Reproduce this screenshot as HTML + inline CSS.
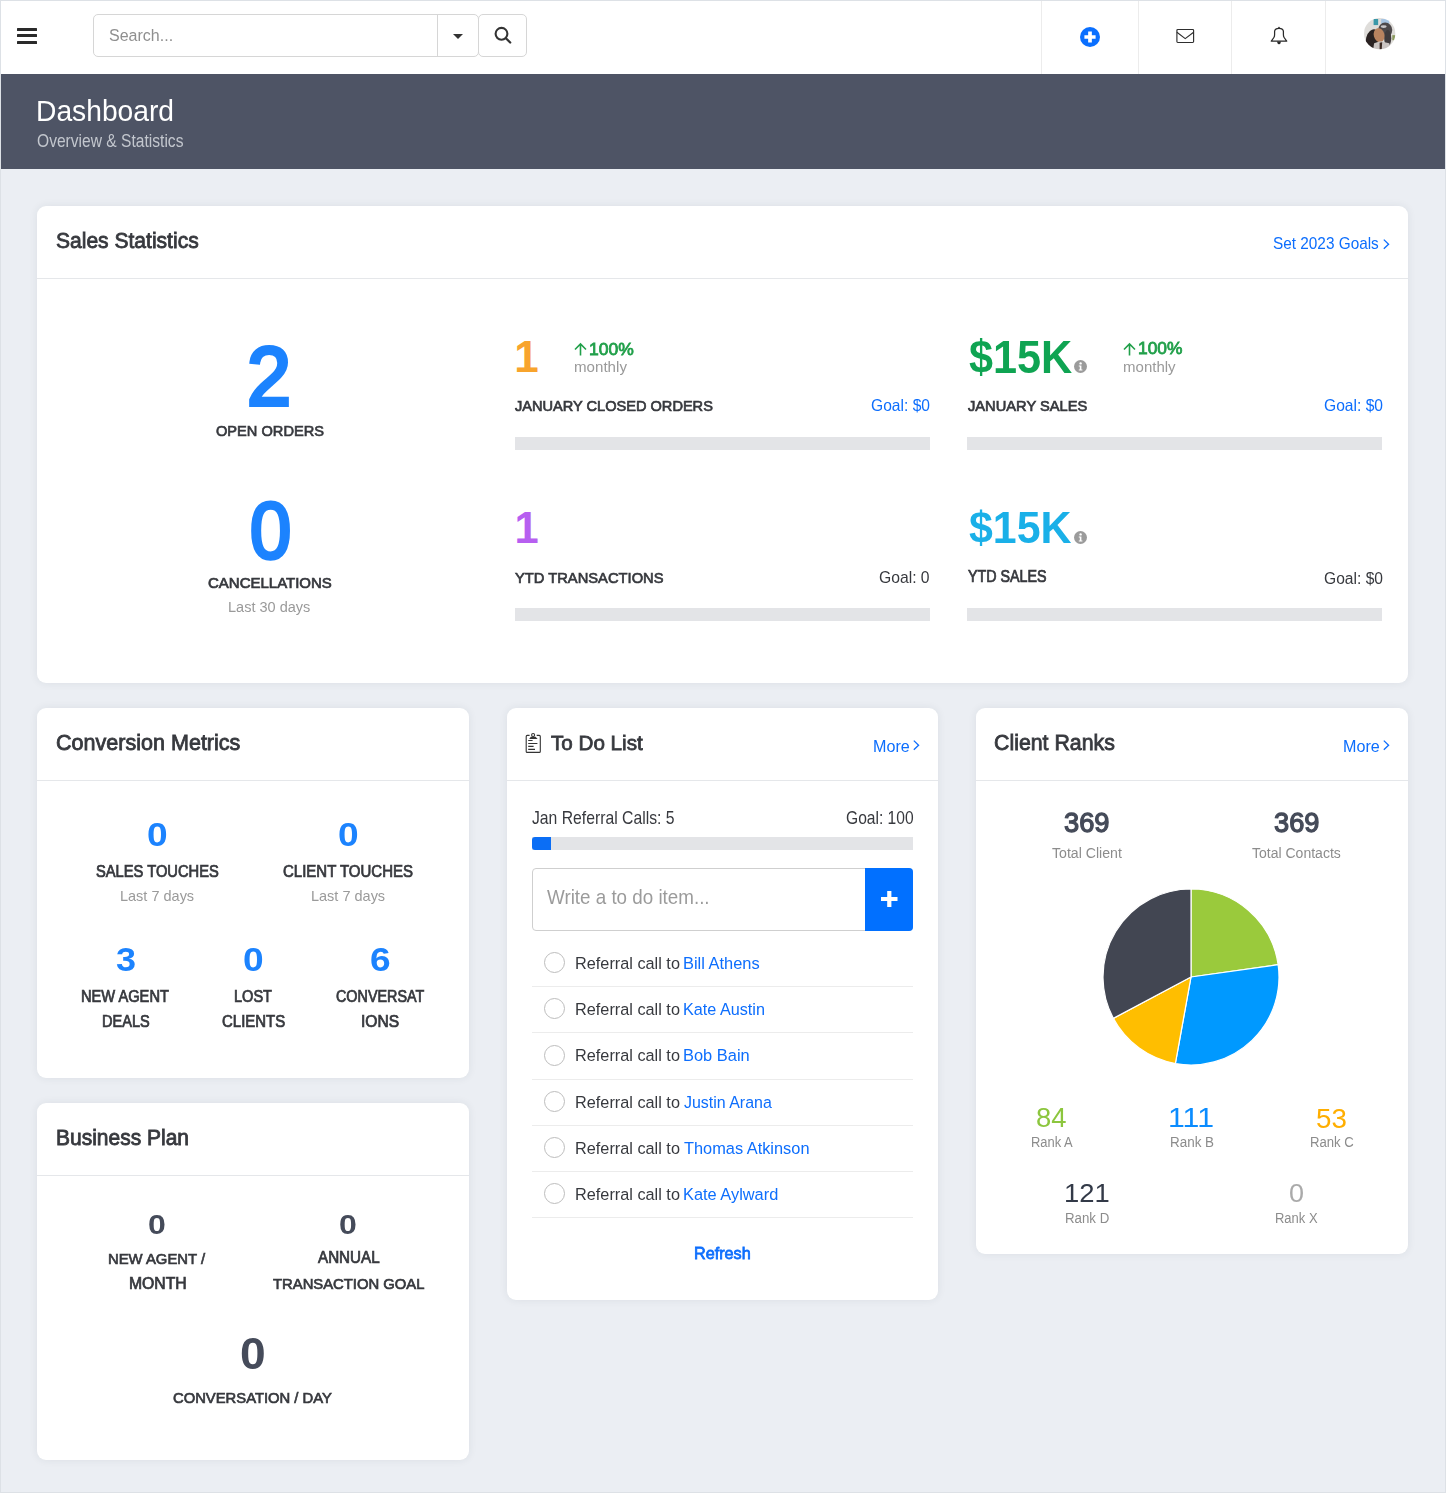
<!DOCTYPE html>
<html><head><meta charset="utf-8"><title>Dashboard</title>
<style>
html,body{margin:0;padding:0}
body{width:1446px;height:1493px;position:relative;overflow:hidden;background:#ebeef3;font-family:"Liberation Sans",sans-serif;}
.frame{position:absolute;left:0;top:0;width:1444px;height:1491px;border:1px solid #dde1e6;}
.nav{position:absolute;left:1px;top:1px;width:1444px;height:73px;background:#fff;}
.sep{position:absolute;top:1px;width:1px;height:73px;background:#ececec;}
.band{position:absolute;left:1px;top:74px;width:1444px;height:95px;background:#4e5465;}
.card{position:absolute;background:#fff;border-radius:9px;box-shadow:0 0 9px rgba(40,50,70,.08);}
.hr{position:absolute;height:1px;background:#e5e7ea;}
.bar{position:absolute;height:13px;background:#e3e4e7;}
.tx{position:absolute;line-height:1;white-space:nowrap;font-family:"Liberation Sans",sans-serif;}
svg{position:absolute;overflow:visible}
</style></head>
<body>
<div class="frame"></div>
<div class="nav"></div>
<!-- hamburger -->
<div style="position:absolute;left:17px;top:28px;width:20px;height:3px;background:#2a2a2a;border-radius:0.5px"></div>
<div style="position:absolute;left:17px;top:34px;width:20px;height:3px;background:#2a2a2a;border-radius:0.5px"></div>
<div style="position:absolute;left:17px;top:41px;width:20px;height:3px;background:#2a2a2a;border-radius:0.5px"></div>
<!-- search group -->
<div style="position:absolute;left:93px;top:14px;width:384px;height:41px;border:1px solid #d6d6d6;border-radius:5px;background:#fff"></div>
<div style="position:absolute;left:437px;top:15px;width:1px;height:41px;background:#d6d6d6"></div>
<div style="position:absolute;left:478px;top:14px;width:47px;height:41px;border:1px solid #d6d6d6;border-radius:5px;background:#fff"></div>
<svg style="left:453px;top:34px" width="10" height="5"><path d="M0 0H10L5 5Z" fill="#333"/></svg>
<svg style="left:490px;top:22px" width="26" height="26" viewBox="0 0 26 26"><circle cx="11.5" cy="11.8" r="5.9" fill="none" stroke="#333" stroke-width="2.1"/><path d="M15.9 16.2L20.2 20.5" stroke="#333" stroke-width="2.3" stroke-linecap="round"/></svg>
<!-- nav right -->
<div class="sep" style="left:1041px"></div>
<div class="sep" style="left:1138px"></div>
<div class="sep" style="left:1231px"></div>
<div class="sep" style="left:1325px"></div>
<svg style="left:1080px;top:26.5px" width="20" height="20" viewBox="0 0 20 20"><circle cx="10" cy="10" r="10" fill="#0a6fff"/><path d="M10 4.4V15.6M4.4 10H15.6" stroke="#fff" stroke-width="3.7"/></svg>
<svg style="left:1176px;top:29px" width="19" height="14" viewBox="0 0 19 14"><rect x="0.9" y="0.5" width="16.7" height="13" rx="0.9" fill="none" stroke="#2e2e2e" stroke-width="1.15"/><path d="M0.9 3.3L9.25 9.6L17.6 3.3" fill="none" stroke="#2e2e2e" stroke-width="1.15"/></svg>
<svg style="left:1266px;top:22px" width="26" height="26" viewBox="0 0 26 26"><path d="M5.3 19.2L7.9 15.5Q8.6 14.5 8.6 12.5V9.5Q8.6 6.3 13 6.3Q17.4 6.3 17.4 9.5V12.5Q17.4 14.5 18.1 15.5L20.7 19.2Z" fill="none" stroke="#2a2a2a" stroke-width="1.25" stroke-linejoin="round"/><circle cx="13" cy="5.5" r="0.8" fill="#2a2a2a"/><path d="M10.9 19.4H15.1Q14.5 22.2 13 22.2Q11.5 22.2 10.9 19.4Z" fill="#2a2a2a"/></svg>
<!-- avatar -->
<svg style="left:1364px;top:17.8px" width="31.3" height="31.3" viewBox="0 0 31 31"><defs><clipPath id="avc"><circle cx="15.5" cy="15.5" r="15.5"/></clipPath><filter id="avb" x="-20%" y="-20%" width="140%" height="140%"><feGaussianBlur stdDeviation="0.55"/></filter></defs><g clip-path="url(#avc)"><g filter="url(#avb)"><rect x="-2" y="-2" width="35" height="35" fill="#dfddda"/><rect x="9.5" y="1" width="4.5" height="6" fill="#3a98a8"/><rect x="17" y="1" width="8" height="5" fill="#a6c4e2"/><ellipse cx="21" cy="12" rx="7" ry="7.5" fill="#4d494b"/><ellipse cx="19.5" cy="8.5" rx="3" ry="1.4" fill="#c9c7c9"/><ellipse cx="23.5" cy="20" rx="3.5" ry="8" fill="#3f3b3c"/><ellipse cx="8.5" cy="21" rx="6.5" ry="10" transform="rotate(15 8.5 21)" fill="#2a2422"/><ellipse cx="15" cy="17" rx="5.3" ry="7" transform="rotate(-15 15 17)" fill="#b9835f"/><path d="M10 25L16 23L25 25L27 32H9Z" fill="#cac4c2"/><path d="M15.5 24.5L18 24L17.5 32H15.5Z" fill="#3a2a24"/><rect x="28" y="17" width="4" height="5" fill="#8b9a5e"/></g></g></svg>

<div class="band"></div>

<!-- cards -->
<div class="card" style="left:37px;top:206px;width:1371px;height:477px"></div>
<div class="hr" style="left:37px;top:278px;width:1371px"></div>
<div class="bar" style="left:515px;top:437px;width:415px"></div>
<div class="bar" style="left:967px;top:437px;width:415px"></div>
<div class="bar" style="left:515px;top:608px;width:415px"></div>
<div class="bar" style="left:967px;top:608px;width:415px"></div>
<!-- arrows -->
<svg style="left:574px;top:343px" width="13" height="13" viewBox="0 0 13 13"><path d="M6.5 12.5V1.2M1 6.5L6.5 1L12 6.5" fill="none" stroke="#21a04a" stroke-width="1.6"/></svg>
<svg style="left:1123px;top:343px" width="13" height="13" viewBox="0 0 13 13"><path d="M6.5 12.5V1.2M1 6.5L6.5 1L12 6.5" fill="none" stroke="#21a04a" stroke-width="1.6"/></svg>
<!-- info icons -->
<svg style="left:1074px;top:360px" width="13" height="13" viewBox="0 0 13 13"><circle cx="6.5" cy="6.5" r="6.5" fill="#9b9b9b"/><circle cx="6.6" cy="3.4" r="1.2" fill="#fff"/><path d="M4.8 5.4H7.4V9.6H8.4V10.6H4.8V9.6H5.8V6.4H4.8Z" fill="#fff"/></svg>
<svg style="left:1074px;top:531px" width="13" height="13" viewBox="0 0 13 13"><circle cx="6.5" cy="6.5" r="6.5" fill="#9b9b9b"/><circle cx="6.6" cy="3.4" r="1.2" fill="#fff"/><path d="M4.8 5.4H7.4V9.6H8.4V10.6H4.8V9.6H5.8V6.4H4.8Z" fill="#fff"/></svg>
<!-- chevron set goals -->
<svg style="left:1382.5px;top:238.5px" width="7" height="11" viewBox="0 0 7 11"><path d="M0.8 0.6L5.6 5.2L0.8 9.8" fill="none" stroke="#0d6efd" stroke-width="1.3"/></svg>

<div class="card" style="left:37px;top:708px;width:432px;height:370px"></div>
<div class="hr" style="left:37px;top:780px;width:432px"></div>

<div class="card" style="left:37px;top:1103px;width:432px;height:357px"></div>
<div class="hr" style="left:37px;top:1175px;width:432px"></div>

<div class="card" style="left:507px;top:708px;width:431px;height:592px"></div>
<div class="hr" style="left:507px;top:780px;width:431px"></div>
<svg style="left:520px;top:728px" width="28" height="30" viewBox="0 0 28 30"><path d="M9.6 7.4H7.2Q6.2 7.4 6.2 8.4V23.4Q6.2 24.4 7.2 24.4H19.3Q20.3 24.4 20.3 23.4V8.4Q20.3 7.4 19.3 7.4H16.7" fill="none" stroke="#333" stroke-width="1.1"/><path d="M9.2 10.9L10.8 8.8H15.6L17.6 10.9Z" fill="#333"/><circle cx="13.1" cy="7" r="1.5" fill="none" stroke="#333" stroke-width="1.1"/><path d="M8.2 12.5H12.6M8.2 15.5H17.4M8.2 18.4H13.6M8.2 21.4H15" stroke="#333" stroke-width="1.1"/></svg>
<svg style="left:913px;top:740px" width="7" height="11" viewBox="0 0 7 11"><path d="M0.8 0.6L5.6 5.2L0.8 9.8" fill="none" stroke="#0d6efd" stroke-width="1.3"/></svg>
<div class="bar" style="left:532px;top:837px;width:381px"></div>
<div style="position:absolute;left:532px;top:837px;width:19px;height:13px;background:#0b6ef5;border-radius:3px 0 0 3px"></div>
<div style="position:absolute;left:532px;top:868px;width:379px;height:61px;border:1px solid #cfcfcf;border-radius:4px;background:#fff"></div>
<div style="position:absolute;left:865px;top:868px;width:48px;height:63px;background:#0170ff;border-radius:0 4px 4px 0"></div>
<svg style="left:881px;top:891px" width="17" height="17" viewBox="0 0 17 17"><path d="M8.3 0V16M0 8H16.5" stroke="#fff" stroke-width="4.2"/></svg>
<!-- todo rows -->
<div style="position:absolute;left:544px;top:952.1px;width:19px;height:19px;border:1px solid #bdbdbd;border-radius:50%"></div>
<div class="hr" style="left:532px;top:986.1px;width:381px;background:#ececec"></div>
<div style="position:absolute;left:544px;top:998.3px;width:19px;height:19px;border:1px solid #bdbdbd;border-radius:50%"></div>
<div class="hr" style="left:532px;top:1032.3px;width:381px;background:#ececec"></div>
<div style="position:absolute;left:544px;top:1044.5px;width:19px;height:19px;border:1px solid #bdbdbd;border-radius:50%"></div>
<div class="hr" style="left:532px;top:1078.5px;width:381px;background:#ececec"></div>
<div style="position:absolute;left:544px;top:1090.7px;width:19px;height:19px;border:1px solid #bdbdbd;border-radius:50%"></div>
<div class="hr" style="left:532px;top:1124.7px;width:381px;background:#ececec"></div>
<div style="position:absolute;left:544px;top:1136.9px;width:19px;height:19px;border:1px solid #bdbdbd;border-radius:50%"></div>
<div class="hr" style="left:532px;top:1170.9px;width:381px;background:#ececec"></div>
<div style="position:absolute;left:544px;top:1183.1px;width:19px;height:19px;border:1px solid #bdbdbd;border-radius:50%"></div>
<div class="hr" style="left:532px;top:1217.1px;width:381px;background:#ececec"></div>

<div class="card" style="left:976px;top:708px;width:432px;height:546px"></div>
<div class="hr" style="left:976px;top:780px;width:432px"></div>
<svg style="left:1383px;top:740px" width="7" height="11" viewBox="0 0 7 11"><path d="M0.8 0.6L5.6 5.2L0.8 9.8" fill="none" stroke="#0d6efd" stroke-width="1.3"/></svg>
<svg style="left:1101.4px;top:887.4px" width="180.0" height="180.0" viewBox="-90.0 -90.0 180.0 180.0"><path d="M0 0L0.00 -88.00A88.0 88.0 0 0 1 87.13 -12.32Z" fill="#9aca3c" stroke="#fff" stroke-width="1.2" stroke-linejoin="round"/><path d="M0 0L87.13 -12.32A88.0 88.0 0 0 1 -15.65 86.60Z" fill="#0099ff" stroke="#fff" stroke-width="1.2" stroke-linejoin="round"/><path d="M0 0L-15.65 86.60A88.0 88.0 0 0 1 -77.66 41.38Z" fill="#ffbe00" stroke="#fff" stroke-width="1.2" stroke-linejoin="round"/><path d="M0 0L-77.66 41.38A88.0 88.0 0 0 1 -0.00 -88.00Z" fill="#424652" stroke="#fff" stroke-width="1.2" stroke-linejoin="round"/></svg>

<div class="tx" style="left:108.78px;top:27.32px;font-size:17.10px;font-weight:400;color:#8f8f8f;letter-spacing:0.000px;transform:scaleX(0.9369);transform-origin:0 0;">Search...</div>
<div class="tx" style="left:36.34px;top:96.32px;font-size:29.38px;font-weight:400;color:#ffffff;letter-spacing:0.000px;transform:scaleX(0.9607);transform-origin:0 0;">Dashboard</div>
<div class="tx" style="left:37.10px;top:132.65px;font-size:17.66px;font-weight:400;color:#c3c7ce;letter-spacing:0.000px;transform:scaleX(0.8833);transform-origin:0 0;">Overview &amp; Statistics</div>
<div class="tx" style="left:56.37px;top:229.93px;font-size:21.93px;font-weight:400;-webkit-text-stroke:0.83px #37393e;color:#37393e;letter-spacing:0.000px;transform:scaleX(0.9600);transform-origin:0 0;">Sales Statistics</div>
<div class="tx" style="left:1273.01px;top:236.29px;font-size:15.72px;font-weight:400;color:#0d6efd;letter-spacing:0.000px;transform:scaleX(0.9763);transform-origin:0 0;">Set 2023 Goals</div>
<div class="tx" style="left:247.25px;top:335.64px;font-size:82.86px;font-weight:400;-webkit-text-stroke:3.81px #1c83fe;color:#1c83fe;letter-spacing:0.000px;transform:scaleX(0.9547);transform-origin:0 0;">2</div>
<div class="tx" style="left:215.68px;top:423.85px;font-size:14.47px;font-weight:400;-webkit-text-stroke:0.67px #37393e;color:#37393e;letter-spacing:0.000px;transform:scaleX(1.0101);transform-origin:0 0;">OPEN ORDERS</div>
<div class="tx" style="left:249.66px;top:489.52px;font-size:80.29px;font-weight:400;-webkit-text-stroke:3.69px #1c83fe;color:#1c83fe;letter-spacing:0.000px;transform:scaleX(0.9221);transform-origin:0 0;">0</div>
<div class="tx" style="left:207.89px;top:575.79px;font-size:14.89px;font-weight:400;-webkit-text-stroke:0.69px #37393e;color:#37393e;letter-spacing:0.000px;transform:scaleX(1.0078);transform-origin:0 0;">CANCELLATIONS</div>
<div class="tx" style="left:228.14px;top:600.34px;font-size:14.48px;font-weight:400;color:#9a9a9a;letter-spacing:0.000px;transform:scaleX(1.0030);transform-origin:0 0;">Last 30 days</div>
<div class="tx" style="left:514.35px;top:335.30px;font-size:44.06px;font-weight:700;color:#f8a42c;letter-spacing:0.000px;">1</div>
<div class="tx" style="left:589.08px;top:340.81px;font-size:17.00px;font-weight:400;-webkit-text-stroke:0.78px #21a04a;color:#21a04a;letter-spacing:0.000px;transform:scaleX(1.0287);transform-origin:0 0;">100%</div>
<div class="tx" style="left:574.02px;top:360.72px;font-size:13.79px;font-weight:400;color:#9a9a9a;letter-spacing:0.000px;transform:scaleX(1.0971);transform-origin:0 0;">monthly</div>
<div class="tx" style="left:515.42px;top:398.81px;font-size:14.75px;font-weight:400;-webkit-text-stroke:0.68px #37393e;color:#37393e;letter-spacing:0.000px;transform:scaleX(0.9880);transform-origin:0 0;">JANUARY CLOSED ORDERS</div>
<div class="tx" style="left:871.12px;top:398.30px;font-size:16.89px;font-weight:400;color:#0d6efd;letter-spacing:0.000px;transform:scaleX(0.9247);transform-origin:0 0;">Goal: $0</div>
<div class="tx" style="left:968.57px;top:334.99px;font-size:45.37px;font-weight:700;color:#0fa452;letter-spacing:0.000px;transform:scaleX(0.9519);transform-origin:0 0;">$15K</div>
<div class="tx" style="left:1138.09px;top:341.13px;font-size:16.86px;font-weight:400;-webkit-text-stroke:0.78px #21a04a;color:#21a04a;letter-spacing:0.000px;transform:scaleX(1.0303);transform-origin:0 0;">100%</div>
<div class="tx" style="left:1122.62px;top:360.35px;font-size:14.34px;font-weight:400;color:#9a9a9a;letter-spacing:0.000px;transform:scaleX(1.0488);transform-origin:0 0;">monthly</div>
<div class="tx" style="left:967.84px;top:398.41px;font-size:15.46px;font-weight:400;-webkit-text-stroke:0.71px #37393e;color:#37393e;letter-spacing:0.000px;transform:scaleX(0.9492);transform-origin:0 0;">JANUARY SALES</div>
<div class="tx" style="left:1323.52px;top:398.30px;font-size:16.89px;font-weight:400;color:#0d6efd;letter-spacing:0.000px;transform:scaleX(0.9247);transform-origin:0 0;">Goal: $0</div>
<div class="tx" style="left:514.52px;top:506.79px;font-size:43.48px;font-weight:700;color:#b75ff0;letter-spacing:0.000px;">1</div>
<div class="tx" style="left:515.35px;top:569.77px;font-size:15.04px;font-weight:400;-webkit-text-stroke:0.69px #37393e;color:#37393e;letter-spacing:0.000px;transform:scaleX(0.9789);transform-origin:0 0;">YTD TRANSACTIONS</div>
<div class="tx" style="left:879.41px;top:569.59px;font-size:16.55px;font-weight:400;color:#37393e;letter-spacing:0.000px;transform:scaleX(0.9492);transform-origin:0 0;">Goal: 0</div>
<div class="tx" style="left:968.87px;top:506.10px;font-size:44.30px;font-weight:700;color:#1ab0e8;letter-spacing:0.000px;transform:scaleX(0.9673);transform-origin:0 0;">$15K</div>
<div class="tx" style="left:967.78px;top:569.47px;font-size:15.74px;font-weight:400;-webkit-text-stroke:0.72px #37393e;color:#37393e;letter-spacing:0.000px;transform:scaleX(0.9081);transform-origin:0 0;">YTD SALES</div>
<div class="tx" style="left:1323.52px;top:569.87px;font-size:16.22px;font-weight:400;color:#37393e;letter-spacing:0.000px;transform:scaleX(0.9632);transform-origin:0 0;">Goal: $0</div>
<div class="tx" style="left:55.85px;top:731.86px;font-size:22.48px;font-weight:400;-webkit-text-stroke:0.85px #37393e;color:#37393e;letter-spacing:0.000px;transform:scaleX(0.9588);transform-origin:0 0;">Conversion Metrics</div>
<div class="tx" style="left:147.00px;top:817.65px;font-size:33.71px;font-weight:700;color:#1c83fe;letter-spacing:0.000px;transform:scaleX(1.1008);transform-origin:0 0;">0</div>
<div class="tx" style="left:96.00px;top:864.35px;font-size:15.89px;font-weight:400;-webkit-text-stroke:0.73px #37393e;color:#37393e;letter-spacing:0.000px;transform:scaleX(0.9258);transform-origin:0 0;">SALES TOUCHES</div>
<div class="tx" style="left:120.34px;top:889.70px;font-size:13.93px;font-weight:400;color:#9a9a9a;letter-spacing:0.000px;transform:scaleX(1.0410);transform-origin:0 0;">Last 7 days</div>
<div class="tx" style="left:338.10px;top:817.65px;font-size:33.71px;font-weight:700;color:#1c83fe;letter-spacing:0.000px;transform:scaleX(1.1008);transform-origin:0 0;">0</div>
<div class="tx" style="left:283.31px;top:864.35px;font-size:15.89px;font-weight:400;-webkit-text-stroke:0.73px #37393e;color:#37393e;letter-spacing:0.000px;transform:scaleX(0.9447);transform-origin:0 0;">CLIENT TOUCHES</div>
<div class="tx" style="left:310.84px;top:889.70px;font-size:13.93px;font-weight:400;color:#9a9a9a;letter-spacing:0.000px;transform:scaleX(1.0410);transform-origin:0 0;">Last 7 days</div>
<div class="tx" style="left:115.78px;top:943.10px;font-size:33.43px;font-weight:700;color:#1c83fe;letter-spacing:0.000px;transform:scaleX(1.0769);transform-origin:0 0;">3</div>
<div class="tx" style="left:242.50px;top:943.10px;font-size:33.43px;font-weight:700;color:#1c83fe;letter-spacing:0.000px;transform:scaleX(1.1102);transform-origin:0 0;">0</div>
<div class="tx" style="left:370.10px;top:943.10px;font-size:33.43px;font-weight:700;color:#1c83fe;letter-spacing:0.000px;transform:scaleX(1.1102);transform-origin:0 0;">6</div>
<div class="tx" style="left:81.20px;top:989.35px;font-size:16.00px;font-weight:400;-webkit-text-stroke:0.74px #37393e;color:#37393e;letter-spacing:0.000px;transform:scaleX(0.9159);transform-origin:0 0;">NEW AGENT</div>
<div class="tx" style="left:101.70px;top:1014.35px;font-size:15.89px;font-weight:400;-webkit-text-stroke:0.73px #37393e;color:#37393e;letter-spacing:0.000px;transform:scaleX(0.9165);transform-origin:0 0;">DEALS</div>
<div class="tx" style="left:233.70px;top:989.45px;font-size:15.89px;font-weight:400;-webkit-text-stroke:0.73px #37393e;color:#37393e;letter-spacing:0.000px;transform:scaleX(0.9167);transform-origin:0 0;">LOST</div>
<div class="tx" style="left:221.62px;top:1014.35px;font-size:15.89px;font-weight:400;-webkit-text-stroke:0.73px #37393e;color:#37393e;letter-spacing:0.000px;transform:scaleX(0.9427);transform-origin:0 0;">CLIENTS</div>
<div class="tx" style="left:336.25px;top:989.45px;font-size:15.89px;font-weight:400;-webkit-text-stroke:0.73px #37393e;color:#37393e;letter-spacing:0.000px;transform:scaleX(0.9038);transform-origin:0 0;">CONVERSAT</div>
<div class="tx" style="left:360.96px;top:1014.35px;font-size:15.89px;font-weight:400;-webkit-text-stroke:0.73px #37393e;color:#37393e;letter-spacing:0.000px;transform:scaleX(0.9817);transform-origin:0 0;">IONS</div>
<div class="tx" style="left:55.74px;top:1127.18px;font-size:22.34px;font-weight:400;-webkit-text-stroke:0.85px #37393e;color:#37393e;letter-spacing:0.000px;transform:scaleX(0.9401);transform-origin:0 0;">Business Plan</div>
<div class="tx" style="left:148.11px;top:1211.01px;font-size:27.86px;font-weight:700;color:#454b5a;letter-spacing:0.000px;transform:scaleX(1.1500);transform-origin:0 0;">0</div>
<div class="tx" style="left:107.86px;top:1251.07px;font-size:15.03px;font-weight:400;-webkit-text-stroke:0.69px #37393e;color:#37393e;letter-spacing:0.000px;transform:scaleX(0.9886);transform-origin:0 0;">NEW AGENT /</div>
<div class="tx" style="left:128.70px;top:1275.52px;font-size:15.57px;font-weight:400;-webkit-text-stroke:0.72px #37393e;color:#37393e;letter-spacing:0.000px;transform:scaleX(1.0118);transform-origin:0 0;">MONTH</div>
<div class="tx" style="left:339.11px;top:1211.01px;font-size:27.86px;font-weight:700;color:#454b5a;letter-spacing:0.000px;transform:scaleX(1.1500);transform-origin:0 0;">0</div>
<div class="tx" style="left:317.66px;top:1250.42px;font-size:15.80px;font-weight:400;-webkit-text-stroke:0.73px #37393e;color:#37393e;letter-spacing:0.000px;transform:scaleX(0.9620);transform-origin:0 0;">ANNUAL</div>
<div class="tx" style="left:272.86px;top:1275.61px;font-size:15.46px;font-weight:400;-webkit-text-stroke:0.71px #37393e;color:#37393e;letter-spacing:0.000px;transform:scaleX(0.9587);transform-origin:0 0;">TRANSACTION GOAL</div>
<div class="tx" style="left:239.98px;top:1333.21px;font-size:43.57px;font-weight:700;color:#454b5a;letter-spacing:0.000px;transform:scaleX(1.0600);transform-origin:0 0;">0</div>
<div class="tx" style="left:173.41px;top:1389.57px;font-size:15.03px;font-weight:400;-webkit-text-stroke:0.69px #37393e;color:#37393e;letter-spacing:0.000px;transform:scaleX(0.9850);transform-origin:0 0;">CONVERSATION / DAY</div>
<div class="tx" style="left:550.98px;top:733.10px;font-size:20.55px;font-weight:400;-webkit-text-stroke:0.78px #37393e;color:#37393e;letter-spacing:0.000px;transform:scaleX(1.0034);transform-origin:0 0;">To Do List</div>
<div class="tx" style="left:873.01px;top:737.68px;font-size:16.09px;font-weight:400;color:#0d6efd;letter-spacing:0.000px;transform:scaleX(1.0028);transform-origin:0 0;">More</div>
<div class="tx" style="left:531.76px;top:809.92px;font-size:17.93px;font-weight:400;color:#37393e;letter-spacing:0.000px;transform:scaleX(0.8778);transform-origin:0 0;">Jan Referral Calls: 5</div>
<div class="tx" style="left:845.62px;top:809.92px;font-size:17.93px;font-weight:400;color:#37393e;letter-spacing:0.000px;transform:scaleX(0.8699);transform-origin:0 0;">Goal: 100</div>
<div class="tx" style="left:546.70px;top:887.35px;font-size:20.97px;font-weight:400;color:#9b9b9b;letter-spacing:0.000px;transform:scaleX(0.8962);transform-origin:0 0;">Write a to do item...</div>
<div class="tx" style="left:574.70px;top:955.00px;font-size:17.24px;font-weight:400;color:#37393e;letter-spacing:0.000px;transform:scaleX(0.9444);transform-origin:0 0;">Referral call to</div>
<div class="tx" style="left:683.39px;top:955.00px;font-size:17.24px;font-weight:400;color:#0d6efd;letter-spacing:0.000px;transform:scaleX(0.9525);transform-origin:0 0;">Bill Athens</div>
<div class="tx" style="left:574.70px;top:1001.20px;font-size:17.24px;font-weight:400;color:#37393e;letter-spacing:0.000px;transform:scaleX(0.9444);transform-origin:0 0;">Referral call to</div>
<div class="tx" style="left:683.40px;top:1001.20px;font-size:17.24px;font-weight:400;color:#0d6efd;letter-spacing:0.000px;transform:scaleX(0.9400);transform-origin:0 0;">Kate Austin</div>
<div class="tx" style="left:574.70px;top:1047.40px;font-size:17.24px;font-weight:400;color:#37393e;letter-spacing:0.000px;transform:scaleX(0.9444);transform-origin:0 0;">Referral call to</div>
<div class="tx" style="left:683.38px;top:1047.40px;font-size:17.24px;font-weight:400;color:#0d6efd;letter-spacing:0.000px;transform:scaleX(0.9535);transform-origin:0 0;">Bob Bain</div>
<div class="tx" style="left:574.70px;top:1093.60px;font-size:17.24px;font-weight:400;color:#37393e;letter-spacing:0.000px;transform:scaleX(0.9444);transform-origin:0 0;">Referral call to</div>
<div class="tx" style="left:684.46px;top:1093.60px;font-size:17.24px;font-weight:400;color:#0d6efd;letter-spacing:0.000px;transform:scaleX(0.9253);transform-origin:0 0;">Justin Arana</div>
<div class="tx" style="left:574.70px;top:1139.80px;font-size:17.24px;font-weight:400;color:#37393e;letter-spacing:0.000px;transform:scaleX(0.9444);transform-origin:0 0;">Referral call to</div>
<div class="tx" style="left:684.37px;top:1139.80px;font-size:17.24px;font-weight:400;color:#0d6efd;letter-spacing:0.000px;transform:scaleX(0.9492);transform-origin:0 0;">Thomas Atkinson</div>
<div class="tx" style="left:574.70px;top:1186.00px;font-size:17.24px;font-weight:400;color:#37393e;letter-spacing:0.000px;transform:scaleX(0.9444);transform-origin:0 0;">Referral call to</div>
<div class="tx" style="left:683.39px;top:1186.00px;font-size:17.24px;font-weight:400;color:#0d6efd;letter-spacing:0.000px;transform:scaleX(0.9501);transform-origin:0 0;">Kate Aylward</div>
<div class="tx" style="left:694.08px;top:1244.60px;font-size:16.41px;font-weight:400;-webkit-text-stroke:0.76px #0d6efd;color:#0d6efd;letter-spacing:0.000px;transform:scaleX(0.9871);transform-origin:0 0;">Refresh</div>
<div class="tx" style="left:994.35px;top:732.43px;font-size:21.93px;font-weight:400;-webkit-text-stroke:0.83px #37393e;color:#37393e;letter-spacing:0.000px;transform:scaleX(0.9731);transform-origin:0 0;">Client Ranks</div>
<div class="tx" style="left:1342.81px;top:737.68px;font-size:16.09px;font-weight:400;color:#0d6efd;letter-spacing:0.000px;transform:scaleX(1.0028);transform-origin:0 0;">More</div>
<div class="tx" style="left:1063.98px;top:809.03px;font-size:27.71px;font-weight:400;-webkit-text-stroke:1.27px #454b59;color:#454b59;letter-spacing:0.000px;transform:scaleX(0.9849);transform-origin:0 0;">369</div>
<div class="tx" style="left:1051.72px;top:845.02px;font-size:15.45px;font-weight:400;color:#8c8c8c;letter-spacing:0.000px;transform:scaleX(0.9150);transform-origin:0 0;">Total Client</div>
<div class="tx" style="left:1273.68px;top:809.03px;font-size:27.71px;font-weight:400;-webkit-text-stroke:1.27px #454b59;color:#454b59;letter-spacing:0.000px;transform:scaleX(0.9826);transform-origin:0 0;">369</div>
<div class="tx" style="left:1252.42px;top:845.02px;font-size:15.45px;font-weight:400;color:#8c8c8c;letter-spacing:0.000px;transform:scaleX(0.9079);transform-origin:0 0;">Total Contacts</div>
<div class="tx" style="left:1036.20px;top:1104.78px;font-size:26.95px;font-weight:400;color:#8cc63e;letter-spacing:0.000px;transform:scaleX(1.0179);transform-origin:0 0;">84</div>
<div class="tx" style="left:1030.57px;top:1135.39px;font-size:14.90px;font-weight:400;color:#8c8c8c;letter-spacing:0.000px;transform:scaleX(0.8679);transform-origin:0 0;">Rank A</div>
<div class="tx" style="left:1168.33px;top:1104.29px;font-size:27.54px;font-weight:400;color:#0a8cff;letter-spacing:0.000px;transform:scaleX(1.0981);transform-origin:0 0;">111</div>
<div class="tx" style="left:1169.52px;top:1135.39px;font-size:14.90px;font-weight:400;color:#8c8c8c;letter-spacing:0.000px;transform:scaleX(0.9022);transform-origin:0 0;">Rank B</div>
<div class="tx" style="left:1315.89px;top:1104.62px;font-size:27.14px;font-weight:400;color:#ffae00;letter-spacing:0.000px;transform:scaleX(1.0219);transform-origin:0 0;">53</div>
<div class="tx" style="left:1309.55px;top:1135.39px;font-size:14.90px;font-weight:400;color:#8c8c8c;letter-spacing:0.000px;transform:scaleX(0.8826);transform-origin:0 0;">Rank C</div>
<div class="tx" style="left:1063.54px;top:1180.14px;font-size:26.29px;font-weight:400;color:#333a48;letter-spacing:0.000px;transform:scaleX(1.0425);transform-origin:0 0;">121</div>
<div class="tx" style="left:1064.54px;top:1210.89px;font-size:14.07px;font-weight:400;color:#8c8c8c;letter-spacing:0.000px;transform:scaleX(0.9441);transform-origin:0 0;">Rank D</div>
<div class="tx" style="left:1288.95px;top:1180.14px;font-size:26.29px;font-weight:400;color:#aaaaaa;letter-spacing:0.000px;transform:scaleX(1.0276);transform-origin:0 0;">0</div>
<div class="tx" style="left:1274.86px;top:1210.89px;font-size:14.07px;font-weight:400;color:#8c8c8c;letter-spacing:0.000px;transform:scaleX(0.9225);transform-origin:0 0;">Rank X</div>
</body></html>
